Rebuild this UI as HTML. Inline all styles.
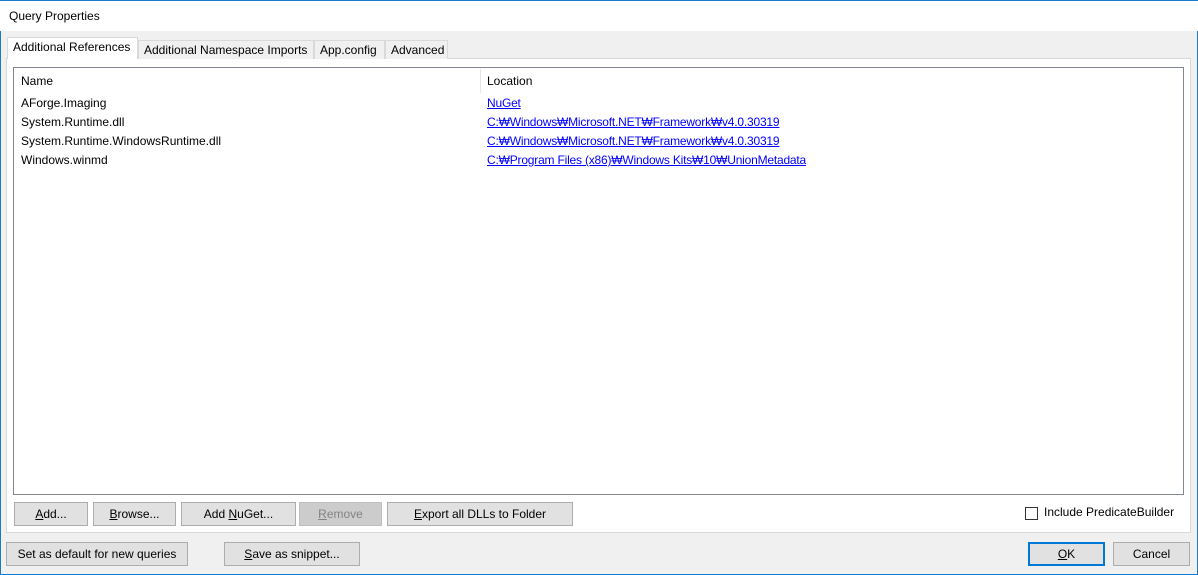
<!DOCTYPE html>
<html><head><meta charset="utf-8"><style>
*{margin:0;padding:0;box-sizing:border-box}
body{width:1198px;height:575px;overflow:hidden;font-family:"Liberation Sans","Noto Sans CJK KR",sans-serif;font-size:12px;color:#000;background:#f0f0f0;position:relative}
.a{position:absolute}
.win{left:0;top:0;width:1198px;height:575px;border:1px solid #1979ca;border-top:none;background:#f0f0f0}
.title{left:0;top:0;width:1198px;height:31px;background:#fff;border-top:1px solid #1979ca}
.panel{left:6px;top:58px;width:1185px;height:475px;background:#fff;border:1px solid #d9d9d9}
.tab{top:40px;height:19px;background:#f0f0f0;border:1px solid #d9d9d9;border-bottom:none;padding:2px 5px 0 5px;white-space:nowrap}
.tab.sel{top:37px;height:22px;background:#fff;padding-top:2px}
.list{left:13px;top:67px;width:1171px;height:428px;border:1px solid #828790;background:#fff}
.btn{height:24px;background:#e1e1e1;border:1px solid #adadad;text-align:center;line-height:22px;white-space:nowrap}
a{color:#0000ff;text-decoration:underline;letter-spacing:-0.2px}
.r{left:7px;white-space:nowrap}
</style></head><body>
<div class="a win"></div>
<div class="a title"><span class="a" style="left:9px;top:8px">Query Properties</span></div>
<div class="a panel"></div>
<div class="a tab sel" style="left:7px;width:131px">Additional References</div>
<div class="a tab" style="left:138px;width:176px">Additional Namespace Imports</div>
<div class="a tab" style="left:314px;width:71px">App.config</div>
<div class="a tab" style="left:385px;width:63px">Advanced</div>
<div class="a list">
<span class="a r" style="top:6px">Name</span>
<div class="a" style="left:466px;top:1px;width:1px;height:24px;background:#e5e5e5"></div>
<span class="a" style="left:473px;top:6px">Location</span>
<span class="a r" style="top:28px">AForge.Imaging</span>
<span class="a r" style="top:47px">System.Runtime.dll</span>
<span class="a r" style="top:66px">System.Runtime.WindowsRuntime.dll</span>
<span class="a r" style="top:85px">Windows.winmd</span>
<a class="a" style="left:473px;top:28px">NuGet</a>
<a class="a" style="left:473px;top:47px;white-space:nowrap">C:₩Windows₩Microsoft.NET₩Framework₩v4.0.30319</a>
<a class="a" style="left:473px;top:66px;white-space:nowrap">C:₩Windows₩Microsoft.NET₩Framework₩v4.0.30319</a>
<a class="a" style="left:473px;top:85px;white-space:nowrap">C:₩Program Files (x86)₩Windows Kits₩10₩UnionMetadata</a>
</div>
<div class="a btn" style="left:14px;top:502px;width:74px"><u>A</u>dd...</div>
<div class="a btn" style="left:93px;top:502px;width:83px"><u>B</u>rowse...</div>
<div class="a btn" style="left:181px;top:502px;width:115px">Add <u>N</u>uGet...</div>
<div class="a btn" style="left:299px;top:502px;width:83px;background:#cccccc;border-color:#bfbfbf;color:#838383"><u>R</u>emove</div>
<div class="a btn" style="left:387px;top:502px;width:186px"><u>E</u>xport all DLLs to Folder</div>
<div class="a" style="left:1025px;top:507px;width:13px;height:13px;border:1px solid #333;background:#fff"></div>
<span class="a" style="left:1044px;top:505px">Include PredicateBuilder</span>
<div class="a btn" style="left:6px;top:542px;width:182px">Set as default for new queries</div>
<div class="a btn" style="left:224px;top:542px;width:136px"><u>S</u>ave as snippet...</div>
<div class="a btn" style="left:1028px;top:542px;width:77px;border:2px solid #0078d7;line-height:20px"><u>O</u>K</div>
<div class="a btn" style="left:1113px;top:542px;width:77px">Cancel</div>
</body></html>
